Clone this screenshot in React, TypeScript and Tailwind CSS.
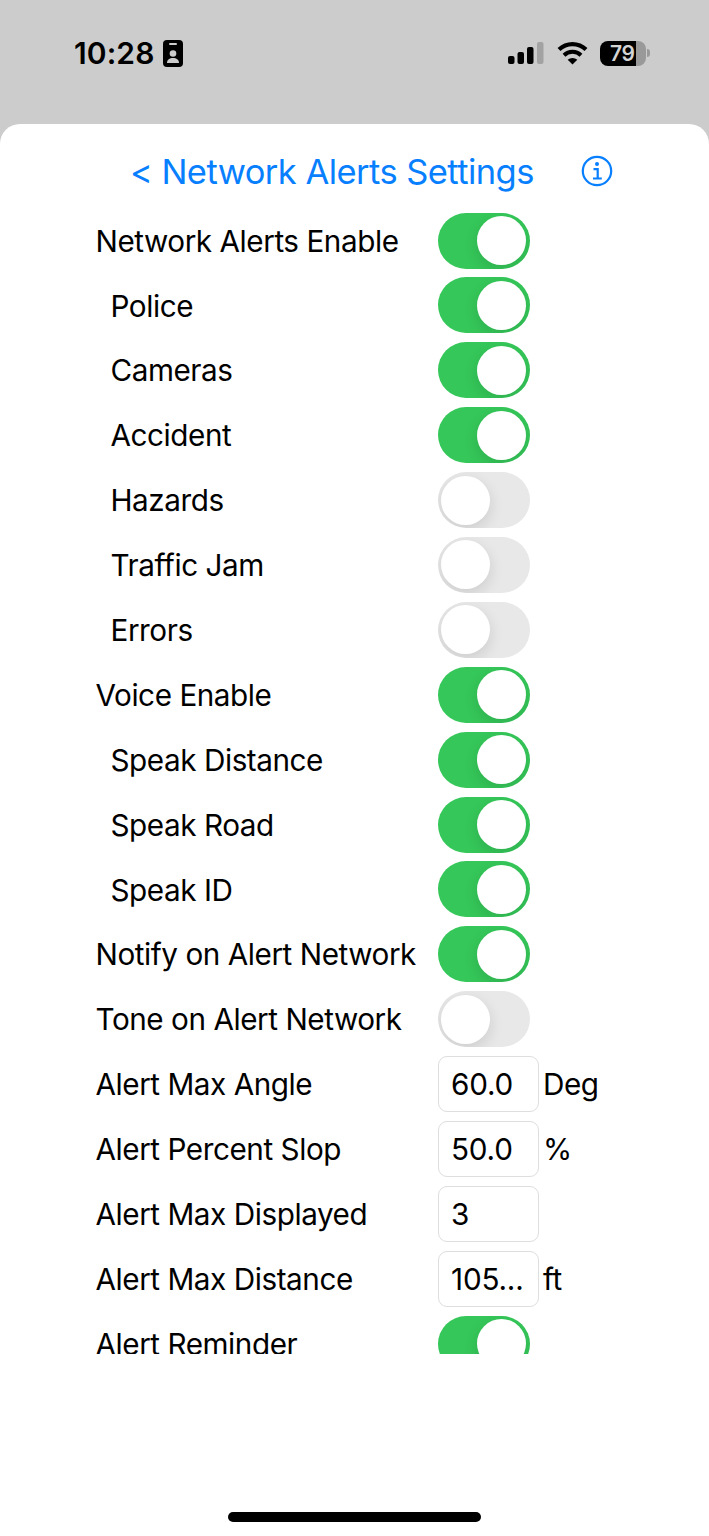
type Setting = {
  label: string;
  nested?: boolean;
  on?: boolean;
  value?: string;
  unit?: string;
};

const settings: Setting[] = [
  { label: "Network Alerts Enable", on: true },
  { label: "Police", nested: true, on: true },
  { label: "Cameras", nested: true, on: true },
  { label: "Accident", nested: true, on: true },
  { label: "Hazards", nested: true, on: false },
  { label: "Traffic Jam", nested: true, on: false },
  { label: "Errors", nested: true, on: false },
  { label: "Voice Enable", on: true },
  { label: "Speak Distance", nested: true, on: true },
  { label: "Speak Road", nested: true, on: true },
  { label: "Speak ID", nested: true, on: true },
  { label: "Notify on Alert Network", on: true },
  { label: "Tone on Alert Network", on: false },
  { label: "Alert Max Angle", value: "60.0", unit: "Deg" },
  { label: "Alert Percent Slop", value: "50.0", unit: "%" },
  { label: "Alert Max Displayed", value: "3" },
  { label: "Alert Max Distance", value: "105...", unit: "ft" },
  { label: "Alert Reminder", on: true },
];

function StatusBar() {
  return (
    <header className="flex h-[106px] items-center pl-[74px] pr-[59px]">
      <span className="w-[89px] text-[30px] leading-none font-semibold tracking-[0.1px]">10:28</span>
      <svg width="20" height="27" viewBox="0 0 20 27">
        <rect width="20" height="27" rx="4" fill="#000" />
        <rect x="6" y="3" width="8" height="2" rx="1" fill="#ccc" />
        <circle cx="10" cy="13.500" r="3.300" fill="#ccc" />
        <path d="M4 23c0-3.300 2.600-5 6-5s6 1.700 6 5z" fill="#ccc" />
      </svg>
      <svg className="ml-auto" width="36" height="24" viewBox="0 0 36 24">
        <rect y="15" width="6.500" height="8" rx="2" />
        <rect x="9.500" y="11" width="6.500" height="12" rx="2" />
        <rect x="19" y="6" width="6.500" height="17" rx="2" />
        <rect x="29" y="1" width="6.500" height="22" rx="2" fill="#a2a2a2" />
      </svg>
      <svg className="ml-[13px]" width="31" height="23" viewBox="0 0 31 23">
        <path d="M2 7.600a19.500 19.500 0 0 1 27 0" fill="none" stroke="#000" strokeWidth="4.200" />
        <path d="M7 13.200a12.300 12.300 0 0 1 17 0" fill="none" stroke="#000" strokeWidth="4" />
        <path d="M15.500 22.500l-4.800-4.700a7 7 0 0 1 9.600 0z" />
      </svg>
      <div className="ml-[12px] flex h-[25px] w-[46px] items-center rounded-[8px] bg-[linear-gradient(to_right,#000_36px,#999_36px)] pl-[10px]">
        <span className="text-[21px] leading-none font-semibold tracking-[-0.3px] text-[#d4d4d4]">79</span>
      </div>
      <div className="ml-[1px] h-[8px] w-[3px] rounded-r-full bg-[#999]" />
    </header>
  );
}

function InfoIcon() {
  return (
    <svg width="32" height="32" viewBox="0 0 32 32" fill="none" stroke="#087fff">
      <circle cx="16" cy="16" r="14.200" strokeWidth="2.200" />
      <circle cx="16" cy="9" r="2" fill="#087fff" stroke="none" />
      <path d="M12.500 14.200h4.200v9.300M12 23.500h8.800" strokeWidth="2.200" />
    </svg>
  );
}

function Toggle({ on }: { on: boolean }) {
  return (
    <div
      className={`flex h-[56px] w-[92px] shrink-0 items-center overflow-hidden rounded-full pr-[4px] pl-[3px] ${
        on ? "justify-end bg-[#35c759]" : "justify-start bg-[#e8e8e8]"
      }`}
    >
      <div className="size-[49px] rounded-full bg-white shadow-[0_5px_14px_1px_rgba(0,0,0,0.11)]" />
    </div>
  );
}

function Row({ label, nested, on, value, unit }: Setting) {
  return (
    <div className="flex h-[56px] shrink-0 items-center">
      <div className={`w-[342.500px] shrink-0 pt-[2px] whitespace-nowrap ${nested ? "pl-[15px]" : ""}`}>
        {label}
      </div>
      {value === undefined ? (
        <Toggle on={!!on} />
      ) : (
        <div className="flex h-[56px] w-[101px] items-center rounded-[9px] border border-[#dedede] pt-[2px] pl-[12px] tracking-[-0.200px]">
          {value}
        </div>
      )}
      {unit && <span className="pt-[2px] pl-[4px]">{unit}</span>}
    </div>
  );
}

export default function App() {
  return (
    <div className="h-[1536px] w-[709px] overflow-hidden bg-[#ccc] font-['Inter',sans-serif] text-black">
      <StatusBar />
      <main className="mt-[18px] flex h-[1412px] flex-col rounded-t-[20px] bg-white">
        <div className="flex h-[88.500px] shrink-0 items-center pt-[5px] pl-[130px] text-[#087fff]">
          <h1 className="w-[451px] pt-[2px] text-[34.500px] leading-none font-normal tracking-[-0.550px] whitespace-nowrap">
            &lt; Network Alerts Settings
          </h1>
          <InfoIcon />
        </div>
        <div className="flex h-[1141.500px] shrink-0 flex-col gap-[8.900px] overflow-hidden pl-[95.500px] text-[29.700px] leading-none tracking-[-0.450px]">
          {settings.map((setting) => (
            <Row key={setting.label} {...setting} />
          ))}
        </div>
        <div className="mx-auto mt-auto mb-[14px] h-[10px] w-[253px] rounded-full bg-black" />
      </main>
    </div>
  );
}
